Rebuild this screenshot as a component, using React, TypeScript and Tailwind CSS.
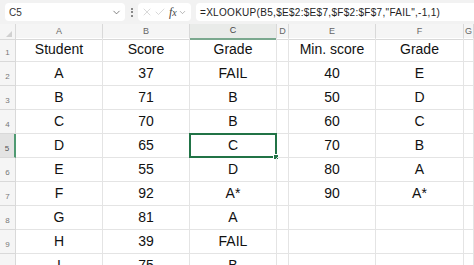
import { Check, ChevronDown, X } from "lucide-react";

const cols = ["A", "B", "C", "D", "E", "F", "G"];

const rows: string[][] = [
  ["Student", "Score", "Grade", "", "Min. score", "Grade"],
  ["A", "37", "FAIL", "", "40", "E"],
  ["B", "71", "B", "", "50", "D"],
  ["C", "70", "B", "", "60", "C"],
  ["D", "65", "C", "", "70", "B"],
  ["E", "55", "D", "", "80", "A"],
  ["F", "92", "A*", "", "90", "A*"],
  ["G", "81", "A", "", "", ""],
  ["H", "39", "FAIL", "", "", ""],
  ["I", "75", "B", "", "", ""],
];

const grid = "grid grid-cols-[16px_87px_87px_87px_12px_87px_88px_1fr]";

export default function App() {
  return (
    <div className="h-[265px] w-[474px] overflow-hidden bg-white font-['Liberation_Sans',Arial,sans-serif] text-[#111]">
      {/* formula bar */}
      <div className="flex h-[24px] items-center bg-[#f2f2f2] pl-[5px]">
        <div className="flex h-[18px] w-[120px] items-center justify-between rounded-[4px] bg-white pl-[4px] pr-[3px] text-[10px] text-[#333]">
          <span>C5</span>
          <ChevronDown className="h-[11px] w-[11px] text-[#555]" strokeWidth={1.6} />
        </div>
        <div className="flex w-[13px] flex-col items-center justify-center gap-[1.5px]">
          <span className="h-[2px] w-[2px] rounded-full bg-[#666]" />
          <span className="h-[2px] w-[2px] rounded-full bg-[#666]" />
          <span className="h-[2px] w-[2px] rounded-full bg-[#666]" />
        </div>
        <div className="flex h-[18px] w-[53px] items-center gap-[1px] rounded-[4px] bg-white pl-[3px] text-[#c4c4c4]">
          <X className="h-[12px] w-[12px]" strokeWidth={1.3} />
          <Check className="h-[12px] w-[12px]" strokeWidth={1.3} />
          <span className="ml-[2px] font-['Liberation_Serif',serif] text-[12px] italic leading-none text-[#444]">
            f<span className="text-[10px]">x</span>
          </span>
          <ChevronDown className="h-[9px] w-[9px] text-[#888]" strokeWidth={1.6} />
        </div>
        <div className="ml-[5px] flex h-[18px] flex-1 items-center rounded-l-[4px] bg-white pl-[4px] text-[10px] tracking-[0.3px] text-[#222]">
          =XLOOKUP(B5,$E$2:$E$7,$F$2:$F$7,"FAIL",-1,1)
        </div>
      </div>

      {/* column headers */}
      <div className={`${grid} h-[14px] bg-[#f5f5f5] text-[9px] text-[#666]`}>
        <div className="relative border-r border-b border-[#d9d9d9]">
          <span className="absolute right-[3px] bottom-[2px] h-0 w-0 border-l-[6px] border-b-[6px] border-l-transparent border-b-[#d0d0d0]" />
        </div>
        {cols.map((c) => (
          <div
            key={c}
            className={
              c === "C"
                ? "flex items-center justify-center border-r border-b-2 border-[#d9d9d9] border-b-[#7aa88e] bg-[#e9ebe9] text-[#444]"
                : "flex items-center justify-center border-r border-b border-[#d9d9d9]"
            }
          >
            {c}
          </div>
        ))}
      </div>

      {/* rows */}
      {rows.map((r, i) => (
        <div key={i} className={`${grid} h-[24px]`}>
          <div
            className={
              i === 4
                ? "flex items-end justify-center border-r-2 border-b border-[#d9d9d9] border-r-[#4f9a72] bg-[#e3e3e3] pb-[2px] text-[8px] text-[#555]"
                : "flex items-end justify-center border-r border-b border-[#d9d9d9] bg-[#f5f5f5] pb-[2px] text-[8px] text-[#777]"
            }
          >
            {i + 1}
          </div>
          {[...r, ""].map((v, j) => (
            <div
              key={j}
              className="relative flex items-center justify-center border-r border-b border-[#e4e4e4] text-[14px]"
            >
              {v}
              {i === 4 && j === 2 && (
                <div className="absolute -top-[1px] -left-[1px] h-[25px] w-[88px] border-2 border-[#217346]">
                  <span className="absolute -right-[3px] -bottom-[3px] h-[4px] w-[4px] bg-[#217346] outline outline-1 outline-white" />
                </div>
              )}
            </div>
          ))}
        </div>
      ))}
    </div>
  );
}
